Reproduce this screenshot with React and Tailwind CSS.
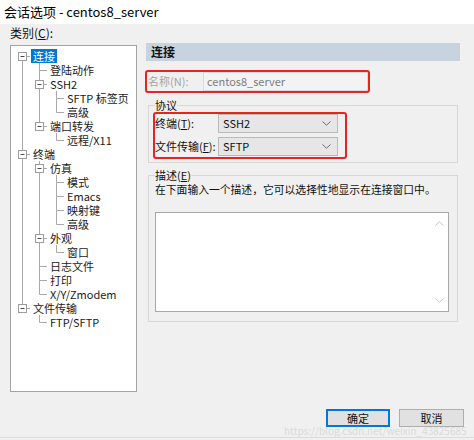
import React from 'react';

const tree = [
  {
    t: '连接',
    sel: true,
    c: [
      { t: '登陆动作' },
      { t: 'SSH2', c: [{ t: 'SFTP 标签页' }, { t: '高级' }] },
      { t: '端口转发', c: [{ t: '远程/X11' }] },
    ],
  },
  {
    t: '终端',
    c: [
      { t: '仿真', c: [{ t: '模式' }, { t: 'Emacs' }, { t: '映射键' }, { t: '高级' }] },
      { t: '外观', c: [{ t: '窗口' }] },
      { t: '日志文件' },
      { t: '打印' },
      { t: 'X/Y/Zmodem' },
    ],
  },
  { t: '文件传输', c: [{ t: 'FTP/SFTP' }] },
];

function flatten(nodes, anc = [], out = []) {
  nodes.forEach((n, i) => {
    const last = i === nodes.length - 1;
    out.push({
      t: n.t,
      sel: n.sel,
      anc,
      last,
      kids: !!n.c,
      first: out.length === 0,
    });
    if (n.c) flatten(n.c, [...anc, last], out);
  });
  return out;
}

const rows = flatten(tree);
const LINE = '#a9a9a9';

function TreeRow({ row }) {
  return (
    <div className='flex h-[14px] items-stretch overflow-hidden'>
      {row.anc.map((isLast, i) => (
        <svg key={i} width='17' height='14' className='shrink-0'>
          {!isLast && <line x1='9.5' y1='0' x2='9.5' y2='14' stroke={LINE} />}
        </svg>
      ))}
      <svg width='17' height='14' className='shrink-0'>
        {!row.first && <line x1='9.5' y1='0' x2='9.5' y2='7.5' stroke={LINE} />}
        {!row.last && <line x1='9.5' y1='7.5' x2='9.5' y2='14' stroke={LINE} />}
        <line x1='9.5' y1='7.5' x2='17' y2='7.5' stroke={LINE} />
        {row.kids && (
          <>
            <rect x='5.5' y='3.5' width='8' height='8' fill='#fff' stroke='#9c9c9c' />
            <line x1='7.5' y1='7.5' x2='11.5' y2='7.5' stroke='#4a4a4a' />
          </>
        )}
      </svg>
      <span
        className={
          row.sel
            ? 'ml-[1px] px-[2px] h-[14px] leading-[14px] bg-[#0078d7] text-white whitespace-nowrap'
            : 'ml-[1px] px-[2px] h-[14px] leading-[14px] text-[#1a1a1a] whitespace-nowrap'
        }
      >
        {row.t}
      </span>
    </div>
  );
}

function Chevron({ up }) {
  return (
    <svg width='9' height='5' viewBox='0 0 9 5' className='shrink-0'>
      <path
        d={up ? 'M0.5 4.5 L4.5 0.8 L8.5 4.5' : 'M0.5 0.5 L4.5 4.2 L8.5 0.5'}
        fill='none'
        stroke={up ? '#c4c4c4' : '#6d6d6d'}
        strokeWidth='1'
      />
    </svg>
  );
}

function Combo({ value }) {
  return (
    <div className='w-[120px] h-[19px] flex items-center justify-between pl-[4px] pr-[6px] bg-[#e6e6e6] border border-[#b9b9b9]'>
      <span className='text-[11px] text-[#111]'>{value}</span>
      <Chevron />
    </div>
  );
}

export default function App() {
  return (
    <div className="w-[474px] h-[440px] bg-[#f0f0f0] flex flex-col relative overflow-hidden font-['Noto_Sans_CJK_SC',sans-serif] text-[11px] text-[#111]">
      <div className='h-[24px] bg-white flex items-center pl-[4px] text-[13px] text-black'>
        会话选项 - centos8_server
      </div>

      <div className='flex items-start'>
        <div className='ml-[10px] w-[127px] flex flex-col pt-[2px]'>
          <div className='leading-[14px] text-[12px]'>
            类别(<span className='underline'>C</span>):
          </div>
          <div className='mt-[5px] h-[347px] bg-white border border-[#a3a3a3] pl-[2px] pt-[3px]'>
            {rows.map((r, i) => (
              <TreeRow key={i} row={r} />
            ))}
          </div>
        </div>

        <div className='ml-[9px] w-[314px] flex flex-col pt-[19px]'>
          <div className='h-[18px] bg-[#c7d4e0] flex items-center pl-[5px] text-[12px] font-bold text-[#111]'>
            连接
          </div>

          <div className='relative mt-[11px] h-[19px] flex items-center'>
            <span className='w-[57px] pl-[2px] text-[#a5a5a5]'>名称(N):</span>
            <div className='w-[165px] h-[19px] flex items-center pl-[3px] bg-[#f3f3f3] border border-[#dadada] text-[#7d7d7d]'>
              centos8_server
            </div>
            <div className='absolute -top-[2px] -left-[1px] w-[225px] h-[23px] border-2 border-[#e4261c] rounded-[3px]' />
          </div>

          <fieldset className='mt-[7px] mx-[2px] border border-[#d7d7d7] pl-[6px] pb-[6px]'>
            <legend className='leading-[14px] text-[11px]'>协议</legend>
            <div className='relative mt-[2px] flex flex-col gap-[4px]'>
              <div className='flex items-center h-[19px]'>
                <span className='w-[63px]'>
                  终端(<span className='underline'>T</span>):
                </span>
                <Combo value='SSH2' />
              </div>
              <div className='flex items-center h-[19px]'>
                <span className='w-[63px]'>
                  文件传输(<span className='underline'>F</span>):
                </span>
                <Combo value='SFTP' />
              </div>
              <div className='absolute -top-[2px] -left-[2px] w-[194px] h-[47px] border-2 border-[#e4261c] rounded-[3px]' />
            </div>
          </fieldset>

          <fieldset className='mt-[5px] mx-[2px] border border-[#d7d7d7] pl-[6px] pb-[9px]'>
            <legend className='leading-[14px] text-[11px]'>
              描述(<span className='underline'>E</span>)
            </legend>
            <div className='leading-[14px] text-[10.8px] whitespace-nowrap'>
              在下面输入一个描述，它可以选择性地显示在连接窗口中。
            </div>
            <div className='mt-[16px] w-[294px] h-[100px] bg-white border border-[#a8a8a8] flex'>
              <div className='flex-1' />
              <div className='w-[17px] flex flex-col items-center justify-between pt-[8px] pb-[8px]'>
                <Chevron up />
                <svg width='9' height='5' viewBox='0 0 9 5'>
                  <path d='M0.5 0.5 L4.5 4.2 L8.5 0.5' fill='none' stroke='#c4c4c4' />
                </svg>
              </div>
            </div>
          </fieldset>
        </div>
      </div>

      <div className='mt-[17px] flex justify-end gap-[9px] pr-[10px]'>
        <button className='w-[64px] h-[18px] bg-[#e1e1e1] border border-[#0078d7] outline outline-1 outline-[#0078d7] -outline-offset-2 text-[11px] leading-none'>
          确定
        </button>
        <button className='w-[65px] h-[18px] bg-[#e1e1e1] border border-[#adadad] text-[11px] leading-none'>
          取消
        </button>
      </div>

      <div className='mt-auto mb-[2px] h-px bg-[#dcdcdc]' />

      <div className='absolute left-[284px] top-[425px] text-[10px] leading-[12px] text-[#dadada] whitespace-nowrap'>
        https://blog.csdn.net/weixin_43825685
      </div>
    </div>
  );
}
